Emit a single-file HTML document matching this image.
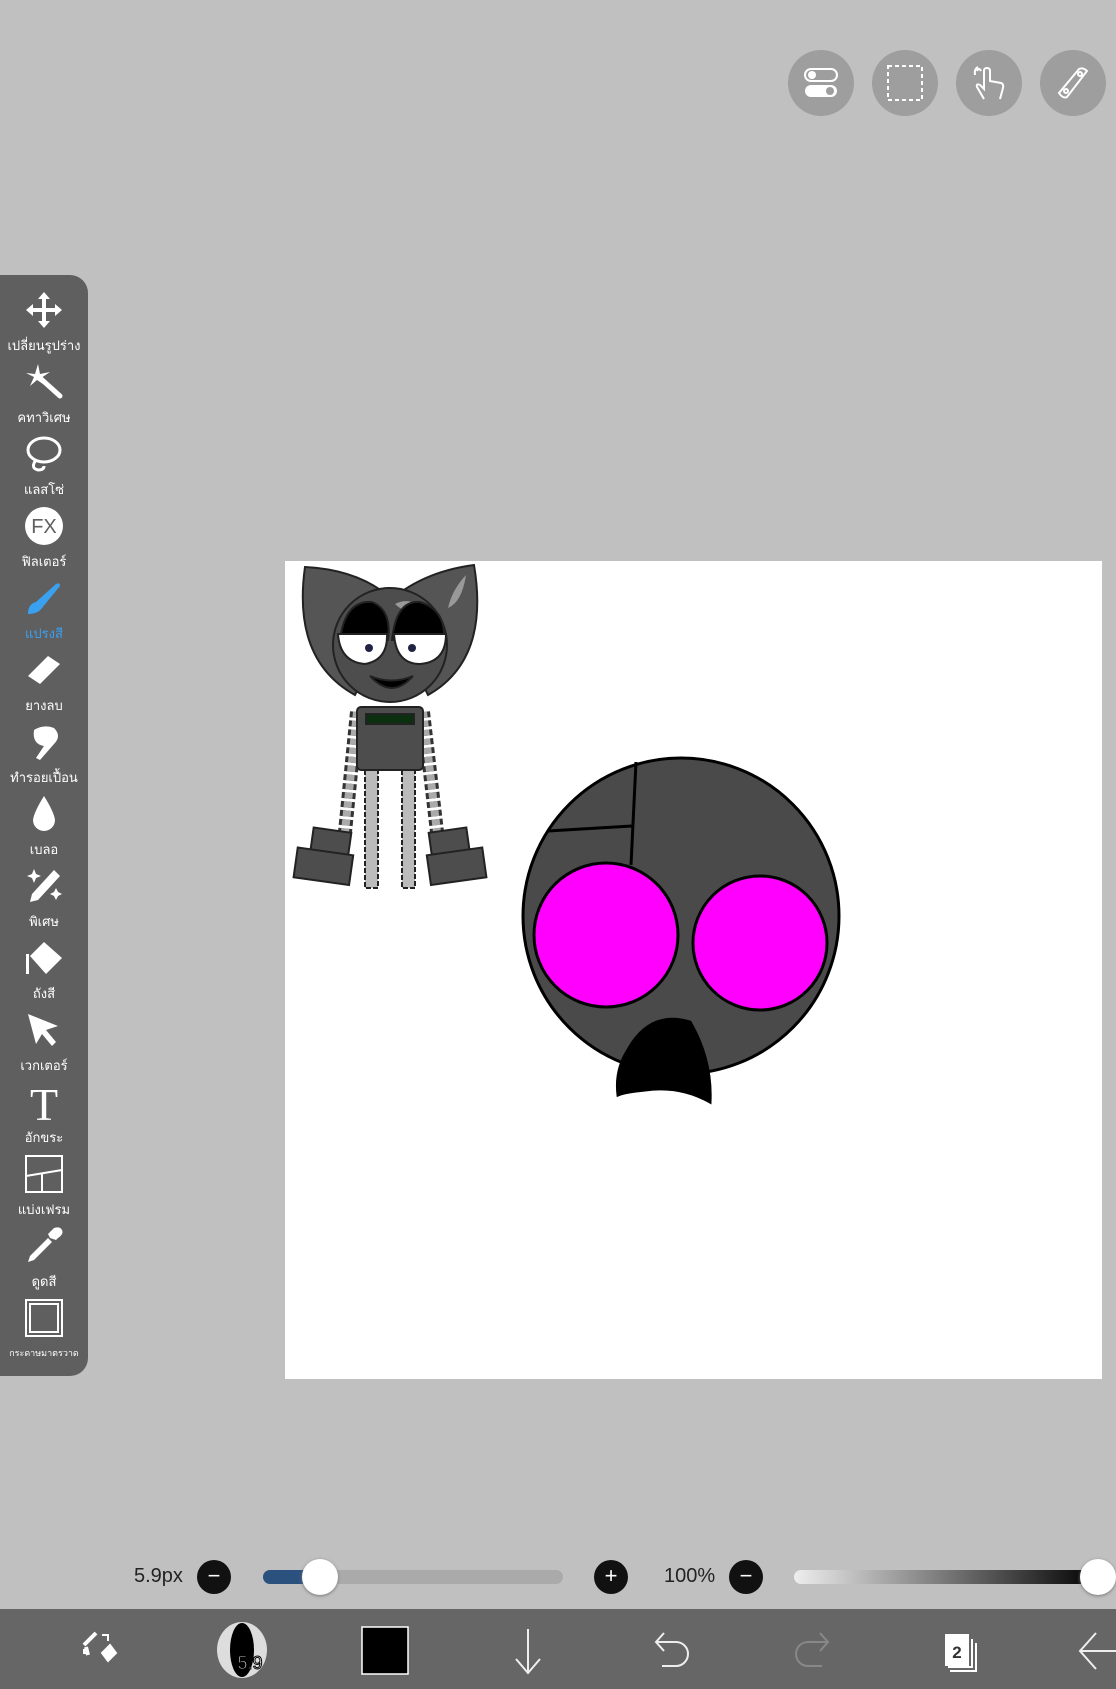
<!DOCTYPE html>
<html><head><meta charset="utf-8"><style>
*{margin:0;padding:0;box-sizing:border-box}
body{width:1116px;height:1689px;background:#c0c0c0;position:relative;overflow:hidden;font-family:"Liberation Sans","Noto Sans CJK SC",sans-serif}
.tb{position:absolute;top:50px;width:66px;height:66px;border-radius:50%;background:#9e9e9e}
.tb svg{position:absolute;left:13px;top:13px}
#side{position:absolute;left:0;top:275px;width:88px;height:1101px;background:#5f5f5f;border-radius:0 18px 18px 0}
.it{position:absolute;left:0;width:88px;text-align:center;color:#fff}
.it svg{display:block;margin:0 auto}
.it span{display:block;font-size:13px;line-height:15px;margin-top:8px;font-family:"Liberation Sans","Noto Sans CJK SC",sans-serif}
#canvas{position:absolute;left:285px;top:561px;width:817px;height:818px;background:#fff}
#bot{position:absolute;left:0;top:1609px;width:1116px;height:80px;background:#666}
.cb{position:absolute;width:34px;height:34px;border-radius:50%;background:#111;color:#fff;text-align:center;line-height:32px;font-size:22px}
</style></head><body>

<div class="tb" style="left:788px"><svg width="40" height="40"><rect x="4" y="6" width="32" height="12" rx="6" fill="none" stroke="#fff" stroke-width="2"/><circle cx="11" cy="12" r="4" fill="#fff"/><rect x="4" y="22" width="32" height="12" rx="6" fill="#fff"/><circle cx="29" cy="28" r="4" fill="#9e9e9e"/></svg></div>
<div class="tb" style="left:872px"><svg width="40" height="40"><rect x="3" y="3" width="34" height="34" fill="none" stroke="#fff" stroke-width="2" stroke-dasharray="4 3"/></svg></div>
<div class="tb" style="left:956px"><svg width="40" height="40" fill="none" stroke="#fff" stroke-width="2"><path d="M15 36 L8 24 Q7 20 11 22 L15 26 V8 Q15 5 18 5 Q21 5 21 8 V18 L32 20 Q35 21 34 25 L31 36"/><path d="M8 8 Q10 4 12 8 M6 12 Q5 6 9 4"/></svg></div>
<div class="tb" style="left:1040px"><svg width="40" height="40" fill="none" stroke="#fff" stroke-width="2"><path d="M6 30 L26 6 Q30 4 34 8 L14 34 Q10 36 6 30Z"/><circle cx="27" cy="11" r="2"/><circle cx="13" cy="28" r="2"/></svg></div>

<div id="side">
<div class="it" style="top:15px"><svg width="40" height="40" fill="#fff"><path d="M20 2 L26 9 H22 V18 H31 V14 L38 20 L31 26 V22 H22 V31 H26 L20 38 L14 31 H18 V22 H9 V26 L2 20 L9 14 V18 H18 V9 H14Z"/></svg><span>เปลี่ยนรูปร่าง</span></div>
<div class="it" style="top:87px"><svg width="40" height="40"><path d="M16 16 L36 34" stroke="#fff" stroke-width="5" stroke-linecap="round"/><path d="M14 2 L16 12 L26 10 L17 16 L22 24 L13 18 L6 24 L10 15 L2 11 L11 12Z" fill="#fff"/></svg><span>คทาวิเศษ</span></div>
<div class="it" style="top:159px"><svg width="40" height="40" fill="none" stroke="#fff" stroke-width="3"><ellipse cx="20" cy="16" rx="16" ry="12"/><path d="M12 26 Q6 34 14 36 Q20 36 20 32"/></svg><span>แลสโซ่</span></div>
<div class="it" style="top:231px"><svg width="40" height="40"><circle cx="20" cy="20" r="19" fill="#fff"/><text x="20" y="27" font-size="20" text-anchor="middle" fill="#5f5f5f" font-family="Liberation Sans">FX</text></svg><span>ฟิลเตอร์</span></div>
<div class="it" style="top:303px;color:#3aa0f0"><svg width="40" height="40"><path d="M4 36 Q4 26 12 24 L32 6 Q36 4 36 8 L18 30 Q14 36 4 36Z" fill="#3aa0f0"/></svg><span>แปรงสี</span></div>
<div class="it" style="top:375px"><svg width="40" height="40" fill="#fff"><path d="M4 26 L24 6 L36 14 L16 34Z"/></svg><span>ยางลบ</span></div>
<div class="it" style="top:447px"><svg width="40" height="40" fill="#fff"><path d="M10 8 Q20 2 30 6 Q38 14 30 22 L16 38 L12 36 L20 24 Q8 22 10 8Z"/></svg><span>ทำรอยเปื้อน</span></div>
<div class="it" style="top:519px"><svg width="40" height="40" fill="#fff"><path d="M20 2 Q30 18 31 26 A11 11 0 0 1 9 26 Q10 18 20 2Z"/></svg><span>เบลอ</span></div>
<div class="it" style="top:591px"><svg width="40" height="40" fill="#fff"><path d="M6 36 L8 28 L30 4 L36 10 L14 34Z"/><path d="M8 8 l2 -5 l2 5 l5 2 l-5 2 l-2 5 l-2 -5 l-5 -2z M30 26 l2 -4 l2 4 l4 2 l-4 2 l-2 4 l-2 -4 l-4 -2z"/></svg><span>พิเศษ</span></div>
<div class="it" style="top:663px"><svg width="40" height="40" fill="#fff"><path d="M6 18 L20 4 L38 20 L22 36Z"/><rect x="2" y="16" width="3" height="20"/></svg><span>ถังสี</span></div>
<div class="it" style="top:735px"><svg width="40" height="40" fill="#fff"><path d="M4 4 L34 16 L22 20 L32 32 L28 36 L18 24 L12 34Z"/></svg><span>เวกเตอร์</span></div>
<div class="it" style="top:807px"><svg width="40" height="40"><text x="20" y="38" font-size="46" text-anchor="middle" fill="#fff" font-family="Liberation Serif">T</text></svg><span>อักขระ</span></div>
<div class="it" style="top:879px"><svg width="40" height="40" fill="none" stroke="#fff" stroke-width="2"><rect x="2" y="2" width="36" height="36"/><path d="M2 22 L38 16 M18 20 V38"/></svg><span>แบ่งเฟรม</span></div>
<div class="it" style="top:951px"><svg width="40" height="40" fill="#fff"><path d="M4 36 L6 30 L24 12 L28 16 L10 34Z"/><path d="M24 8 L30 2 Q36 0 38 4 Q40 8 34 12 L32 14 L26 12Z"/></svg><span>ดูดสี</span></div>
<div class="it" style="top:1023px"><svg width="40" height="40" fill="none" stroke="#fff" stroke-width="2"><rect x="2" y="2" width="36" height="36"/><rect x="6" y="6" width="28" height="28"/></svg><span style="font-size:9px">กระดาษมาตรวาด</span></div>
</div>

<div id="canvas"></div>
<svg style="position:absolute;left:0;top:0" width="1116" height="1689">
<g stroke="#222" stroke-width="2">
<path d="M305 567 Q365 570 398 605 L355 695 Q292 660 305 567Z" fill="#555"/>
<path d="M474 565 Q420 572 385 605 L428 695 Q490 660 474 565Z" fill="#555"/>
<path d="M466 575 Q452 590 448 608 Q462 602 466 575Z" fill="#999" stroke="none"/>
<circle cx="390" cy="645" r="57" fill="#4d4d4d"/>
<path d="M395 604 Q410 596 425 610 Q410 618 395 604Z" fill="#999" stroke="none"/>
<path d="M340 640 Q345 600 372 602 Q392 610 388 640Z" fill="#000"/>
<path d="M392 640 Q396 600 420 602 Q446 610 444 640Z" fill="#000"/>
<path d="M338 634 Q340 662 365 664 Q388 660 387 634Z" fill="#fff"/>
<path d="M394 634 Q396 664 420 664 Q446 662 446 634Z" fill="#fff"/>
<circle cx="369" cy="648" r="4" fill="#224" stroke="none"/><circle cx="412" cy="648" r="4" fill="#224" stroke="none"/>
<path d="M370 676 Q392 700 413 676 Q392 685 370 676Z" fill="#000"/>
<path d="M357 712 L345 832 M423 712 L437 832" stroke="#333" stroke-width="14" stroke-dasharray="6 3"/>
<path d="M357 712 L345 832 M423 712 L437 832" stroke="#aaa" stroke-width="8" stroke-dasharray="6 3"/>
<rect x="365" y="768" width="13" height="120" fill="#bbb" stroke-dasharray="5 2"/>
<rect x="402" y="768" width="13" height="120" fill="#bbb" stroke-dasharray="5 2"/>
<rect x="357" y="707" width="66" height="63" rx="4" fill="#4d4d4d"/>
<rect x="366" y="714" width="48" height="10" fill="#0a3010"/>
<rect x="311" y="830" width="38" height="36" fill="#4d4d4d" transform="rotate(8 330 848)"/>
<rect x="298" y="852" width="56" height="30" fill="#4d4d4d" transform="rotate(8 330 848)"/>
<rect x="431" y="830" width="38" height="36" fill="#4d4d4d" transform="rotate(-8 450 848)"/>
<rect x="426" y="852" width="56" height="30" fill="#4d4d4d" transform="rotate(-8 450 848)"/>
</g>
<g stroke="#000" stroke-width="3">
<circle cx="681" cy="916" r="158" fill="#4a4a4a"/>
<path d="M636 762 L631 865 M548 831 L632 826" fill="none"/>
<circle cx="606" cy="935" r="72" fill="#ff00ff"/>
<circle cx="760" cy="943" r="67" fill="#ff00ff"/>
<path d="M628 1050 Q650 1010 690 1022 Q712 1060 710 1102 Q680 1085 645 1090 Q625 1092 618 1095 Q615 1070 628 1050Z" fill="#000"/>
</g>
</svg>

<div style="position:absolute;left:134px;top:1565px;font-size:20px;color:#222">5.9px</div>
<div class="cb" style="left:197px;top:1560px">−</div>
<div style="position:absolute;left:263px;top:1570px;width:300px;height:14px;border-radius:7px;background:#aaa"></div>
<div style="position:absolute;left:263px;top:1570px;width:60px;height:14px;border-radius:7px;background:#2b527f"></div>
<div style="position:absolute;left:302px;top:1559px;width:36px;height:36px;border-radius:50%;background:#fff;box-shadow:0 1px 3px #777"></div>
<div class="cb" style="left:594px;top:1560px">+</div>
<div style="position:absolute;left:664px;top:1565px;font-size:20px;color:#222">100%</div>
<div class="cb" style="left:729px;top:1560px">−</div>
<div style="position:absolute;left:794px;top:1570px;width:305px;height:14px;border-radius:7px;background:linear-gradient(90deg,#eee,#000)"></div>
<div style="position:absolute;left:1080px;top:1559px;width:36px;height:36px;border-radius:50%;background:#fff;box-shadow:0 1px 3px #777"></div>

<div id="bot"></div>
<svg style="position:absolute;left:0;top:1609px" width="1116" height="80" fill="none" stroke="#fff" stroke-width="2">
<path d="M84 36 L96 24 M88 46 L86 38" stroke-width="4"/><path d="M102 26 h6 v6 M88 44 h-4 v-4"/><path d="M102 44 L110 36 L116 44 L108 52Z" fill="#fff"/>
<ellipse cx="242" cy="41" rx="25" ry="28" fill="#ddd" stroke="none"/><ellipse cx="242" cy="41" rx="12" ry="27" fill="#000" stroke="none"/>
<text x="250" y="60" font-size="18" fill="#fff" stroke="#000" stroke-width="1" text-anchor="middle" font-family="Liberation Sans">5.9</text>
<rect x="362" y="18" width="46" height="47" fill="#000" stroke="#fff" stroke-width="1.5"/>
<path d="M528 20 V64 M516 50 L528 64 L540 50" stroke="#eee"/>
<path d="M656 33 h20 a12 12 0 0 1 0 24 h-14 M664 24 L656 33 L664 42" stroke="#eee"/>
<path d="M828 33 h-20 a12 12 0 0 0 0 24 h14 M820 24 L828 33 L820 42" stroke="#888"/>
<rect x="946" y="26" width="22" height="30" fill="#fff"/><path d="M948 58 h24 V30 M950 62 h26 V34"/>
<text x="957" y="49" font-size="17" font-weight="bold" fill="#333" stroke="none" text-anchor="middle" font-family="Liberation Sans">2</text>
<path d="M1116 42 H1080 M1096 24 L1080 42 L1096 60" stroke="#eee"/>
</svg>
</body></html>
